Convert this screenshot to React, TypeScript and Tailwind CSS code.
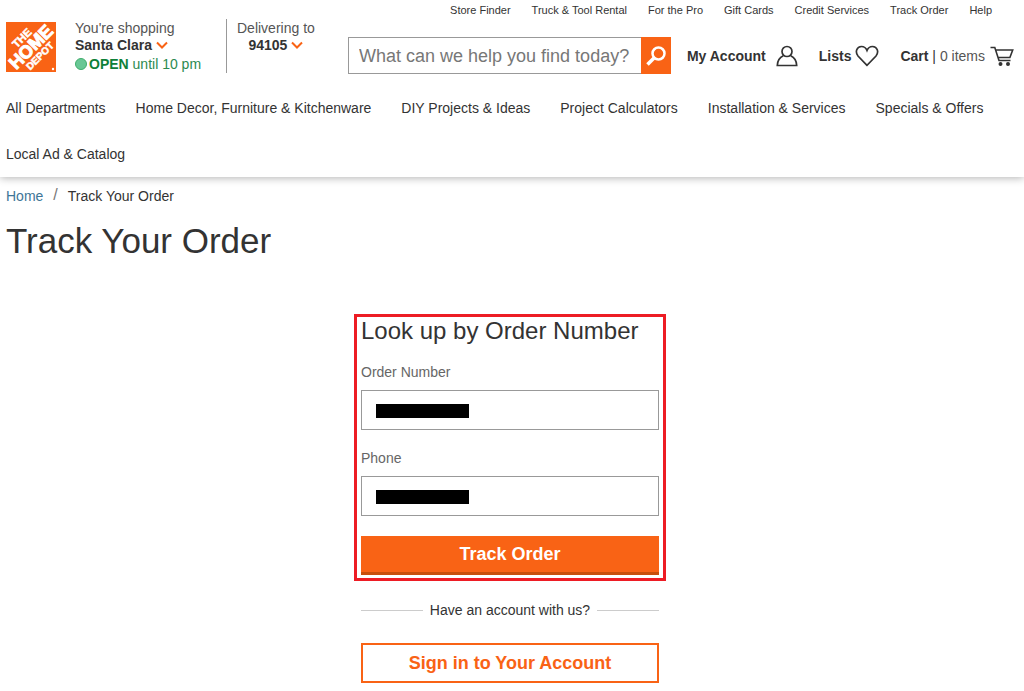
import React from "react";

const topLinks = [
  "Store Finder",
  "Truck & Tool Rental",
  "For the Pro",
  "Gift Cards",
  "Credit Services",
  "Track Order",
  "Help",
];

const departments = [
  "All Departments",
  "Home Decor, Furniture & Kitchenware",
  "DIY Projects & Ideas",
  "Project Calculators",
  "Installation & Services",
  "Specials & Offers",
  "Local Ad & Catalog",
];

function Logo() {
  return (
    <svg viewBox="0 0 50 50" className="h-[50px] w-[50px]" role="img" aria-label="The Home Depot">
      <rect width="50" height="50" fill="#f96315" />
      <g
        transform="rotate(-45 25 25)"
        fill="#fff"
        fontFamily="'Liberation Sans', Arial, sans-serif"
        fontWeight="900"
        textAnchor="middle"
        stroke="#fff"
      >
        <text x="25" y="16" fontSize="11" strokeWidth="0.5">THE</text>
        <text x="25" y="31" fontSize="18" strokeWidth="1">HOME</text>
        <text x="25" y="41" fontSize="10" strokeWidth="0.5">DEPOT</text>
      </g>
      <circle cx="47" cy="47" r="1.2" fill="#fff" />
    </svg>
  );
}

function Chevron() {
  return (
    <svg viewBox="0 0 12 8" className="h-2 w-3" fill="none" stroke="#f96315" strokeWidth="2">
      <path d="M1 1.500 6 6.500 11 1.500" />
    </svg>
  );
}

function SearchIcon() {
  return (
    <svg viewBox="0 0 20 20" className="h-5 w-5" fill="none" stroke="#fff">
      <circle cx="12.500" cy="7.500" r="6" strokeWidth="2.500" />
      <path d="M8 12 1.500 18.500" strokeWidth="3.500" />
    </svg>
  );
}

function AccountIcon() {
  return (
    <svg viewBox="0 0 22 22" className="h-[22px] w-[22px]" fill="none" stroke="#333" strokeWidth="1.700">
      <circle cx="11" cy="6.500" r="5" />
      <path d="M7.300 10.800C3.500 12.500 1.500 15.800 1.300 20.500h19.400c-.2-4.700-2.200-8-6-9.700" />
    </svg>
  );
}

function HeartIcon() {
  return (
    <svg viewBox="0 0 24 22" className="h-[22px] w-6" fill="none" stroke="#333" strokeWidth="1.700">
      <path d="M12 20.300 3 11C-.2 7 1.700 1.500 6.500 1.500c2.600 0 4.500 1.500 5.500 4 1-2.500 2.900-4 5.500-4C22.300 1.500 24.200 7 21 11z" />
    </svg>
  );
}

function CartIcon() {
  return (
    <svg viewBox="0 0 24 20" className="h-5 w-6" fill="none" stroke="#333" strokeWidth="1.600">
      <path d="M.5 1.500h4.300L9 14.500h11.500M5.700 4h17l-2.800 7.500H8.200" />
      <circle cx="10.500" cy="18" r="1.200" fill="#333" />
      <circle cx="18" cy="18" r="1.200" fill="#333" />
    </svg>
  );
}

function Field({ id, label, type }: { id: string; label: string; type: string }) {
  return (
    <div className="mb-5">
      <label htmlFor={id} className="block text-sm leading-4 text-[#666]">
        {label}
      </label>
      <div className="relative mt-[10px]">
        <input id={id} type={type} className="block h-10 w-full border border-[#999] bg-white px-[15px] text-sm outline-none" />
        {/* masked value */}
        <span className="pointer-events-none absolute top-[14px] left-[15px] h-[14px] w-[93px] bg-black" />
      </div>
    </div>
  );
}

export default function App() {
  return (
    <div className="bg-white font-['Liberation_Sans',Arial,sans-serif] text-[#333]">
      <header className="pr-[10px] pl-[6px] shadow-[0_1px_8px_rgba(0,0,0,0.3)]">
        <div className="flex h-[85px] items-start">
          <a href="#" className="mt-[22px] shrink-0">
            <Logo />
          </a>
          <div className="mt-5 ml-[19px] w-[151px] shrink-0 text-sm leading-4">
            <div className="text-[#555]">You're shopping</div>
            <button className="flex items-center gap-1 leading-[18px] font-bold">
              Santa Clara <Chevron />
            </button>
            <div className="mt-px flex items-center gap-[2px] leading-[18px] text-[#2c8a50]">
              <span className="h-3 w-3 rounded-full border border-[#3fae6c] bg-[#69c795]" />
              <span>
                <b className="text-[#0e8038]">OPEN</b> until 10 pm
              </span>
            </div>
          </div>
          <div className="mt-[19px] h-[54px] shrink-0 border-l border-[#999] pl-[10px] text-sm leading-4">
            <div className="pt-px text-[#555]">Delivering to</div>
            <button className="mx-auto flex items-center gap-1 leading-[18px] font-bold">
              94105 <Chevron />
            </button>
          </div>
          <div className="ml-auto w-[666px]">
            <nav className="flex h-[37px] justify-end gap-[21px] pt-[3px] pr-[22px] text-[11px] leading-[14px]">
              {topLinks.map((t) => (
                <a key={t} href="#" className="whitespace-nowrap">
                  {t}
                </a>
              ))}
            </nav>
            <div className="flex items-center justify-between">
              <form className="flex h-[37px] w-[323px]">
                <input
                  type="text"
                  aria-label="Search"
                  placeholder="What can we help you find today?"
                  className="min-w-0 flex-1 border border-r-0 border-[#999] pl-[10px] text-lg outline-none placeholder:text-[#777]"
                />
                <button type="button" aria-label="Submit search" className="flex w-[30px] items-center justify-center bg-[#f96315]">
                  <SearchIcon />
                </button>
              </form>
              <div className="flex items-center gap-[21px] text-sm">
                <a href="#" className="flex items-center gap-[10px] font-bold">
                  My Account <AccountIcon />
                </a>
                <a href="#" className="flex items-center gap-1 font-bold">
                  Lists <HeartIcon />
                </a>
                <a href="#" className="flex items-center gap-[5px]">
                  <span>
                    <b>Cart</b> | <span className="text-[#555]">0 items</span>
                  </span>
                  <CartIcon />
                </a>
              </div>
            </div>
          </div>
        </div>
        <nav className="flex flex-wrap gap-x-[30px] text-sm leading-[46px]">
          {departments.map((d) => (
            <a key={d} href="#">
              {d}
            </a>
          ))}
        </nav>
      </header>

      <main className="pr-[10px] pl-[6px]">
        <nav aria-label="Breadcrumb" className="flex gap-[10px] pt-[10px] text-sm leading-[18px]">
          <a href="#" className="text-[#3e7697]">
            Home
          </a>
          <span className="text-base leading-4 text-[#777]">/</span>
          <span>Track Your Order</span>
        </nav>
        <h1 className="mt-4 text-[35px] leading-10">Track Your Order</h1>

        <section className="mx-auto mt-[53px] w-[312px]">
          <form className="border-3 border-[#ed1c24] px-1 pb-[3px]">
            <h2 className="mb-[19px] text-2xl leading-7 whitespace-nowrap">Look up by Order Number</h2>
            <Field id="order" label="Order Number" type="text" />
            <Field id="phone" label="Phone" type="tel" />
            <button type="button" className="block h-[39px] w-full border-b-3 border-[#c84f0c] bg-[#f96315] text-lg font-bold text-white">
              Track Order
            </button>
          </form>
          <div className="px-[7px]">
            <div className="mt-5 flex items-center gap-[7px] text-sm leading-[18px]">
              <span className="h-px flex-1 bg-[#ccc]" />
              Have an account with us?
              <span className="h-px flex-1 bg-[#ccc]" />
            </div>
            <button type="button" className="mt-6 block h-10 w-full border-2 border-[#f96315] text-lg font-bold text-[#f96315]">
              Sign in to Your Account
            </button>
          </div>
        </section>
      </main>
    </div>
  );
}
